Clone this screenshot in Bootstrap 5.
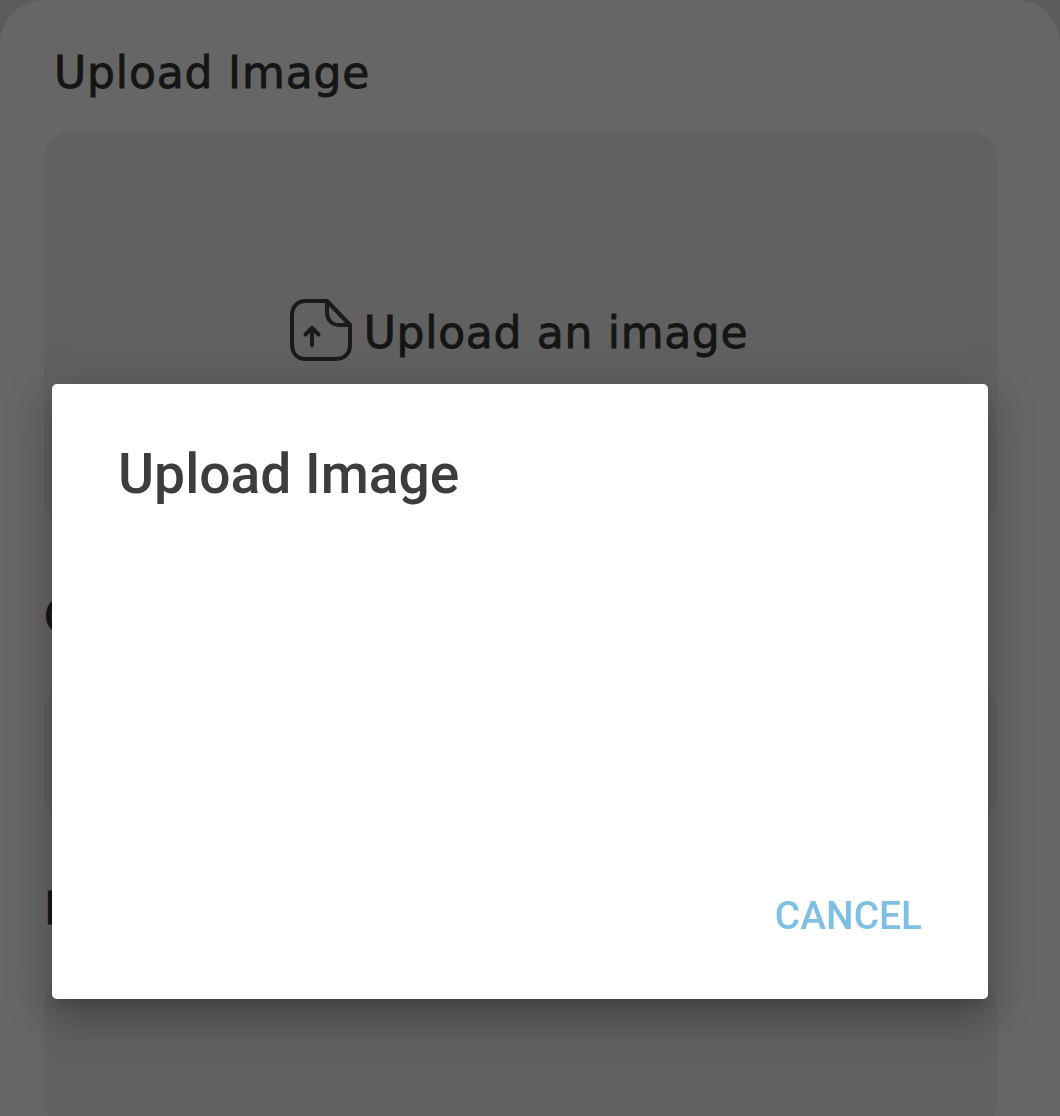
<!DOCTYPE html>
<html lang="en">
<head>
<meta charset="utf-8">
<title>Upload Image</title>
<link rel="stylesheet" href="https://cdn.jsdelivr.net/npm/bootstrap@5.3.0/dist/css/bootstrap.min.css">
<style>
html, body { height: 100%; overflow: hidden; }
body { background: #5c5c5c; font-family: "DejaVu Sans", "Liberation Sans", sans-serif; }
.sheet-page { height: 1116px; overflow: hidden; background: #666; border-radius: 44px 44px 0 0; padding: 49px 63px 0 44px; color: #151515; }
.sheet-title { font-size: 44px; line-height: 48px; font-weight: 400; margin: 0 0 36px 10px; letter-spacing: .85px; -webkit-text-stroke: .9px #151515; }
.drop-panel { background: #616161; border-radius: 24px; }
.drop-upload { height: 392px; padding: 165px 4px 0 0; gap: 11px; }
.upload-label { font-size: 44px; line-height: 64px; font-weight: 400; letter-spacing: .7px; padding-top: 3px; -webkit-text-stroke: .9px #151515; }
.field-label { font-size: 44px; line-height: 48px; font-weight: 400; margin: 0; -webkit-text-stroke: .9px #151515; }
.label-first { margin-top: 68px; }
.label-second { margin-top: 65px; }
.drop-middle { height: 135px; margin-top: 44px; }
.drop-last { height: 150px; margin-top: 44px; }
.scrim-dialog { position: fixed; left: 52px; top: 384px; width: 936px; height: 615px; background: #fff; border-radius: 5px; box-shadow: 0 11px 15px -7px rgba(0,0,0,.2), 0 24px 38px 3px rgba(0,0,0,.14), 0 9px 46px 8px rgba(0,0,0,.12); padding: 56px 66px 61px 66px; font-family: "Roboto", "Liberation Sans", sans-serif; }
.dialog-heading { font-size: 55.2px; line-height: 68px; font-weight: 500; color: #3d3d3d; margin: 0; }
.dialog-cancel { font-size: 38.9px; line-height: 44px; font-weight: 500; color: #7fc0e2; background: none; border: 0; padding: 0; }
</style>
</head>
<body>
<main class="sheet-page">
  <h1 class="sheet-title">Upload Image</h1>
  <div class="drop-panel drop-upload d-flex justify-content-center align-items-start">
    <svg width="64" height="64" viewBox="0 0 64 64" fill="none" stroke="#1a1a1a" stroke-width="4" stroke-linecap="round" stroke-linejoin="round" aria-hidden="true">
      <path d="M38 3H17C8.500 3 3 8.500 3 17V46C3 55.500 8.500 61 17 61H47C55.500 61 61 55.500 61 47V27Z"/>
      <path d="M38 3V14C38 22 43 27 50 27H61"/>
      <path d="M23 47V30M16.500 36.500L23 30L29.500 36.500"/>
    </svg>
    <span class="upload-label">Upload an image</span>
  </div>
  <p class="field-label label-first">Caption</p>
  <div class="drop-panel drop-middle"></div>
  <p class="field-label label-second">Description</p>
  <div class="drop-panel drop-last"></div>
</main>
<div class="scrim-dialog d-flex flex-column justify-content-between" role="dialog">
  <h2 class="dialog-heading">Upload Image</h2>
  <div class="d-flex justify-content-end"><button class="dialog-cancel" type="button">CANCEL</button></div>
</div>
<script src="https://cdn.jsdelivr.net/npm/bootstrap@5.3.0/dist/js/bootstrap.bundle.min.js"></script>
</body>
</html>
